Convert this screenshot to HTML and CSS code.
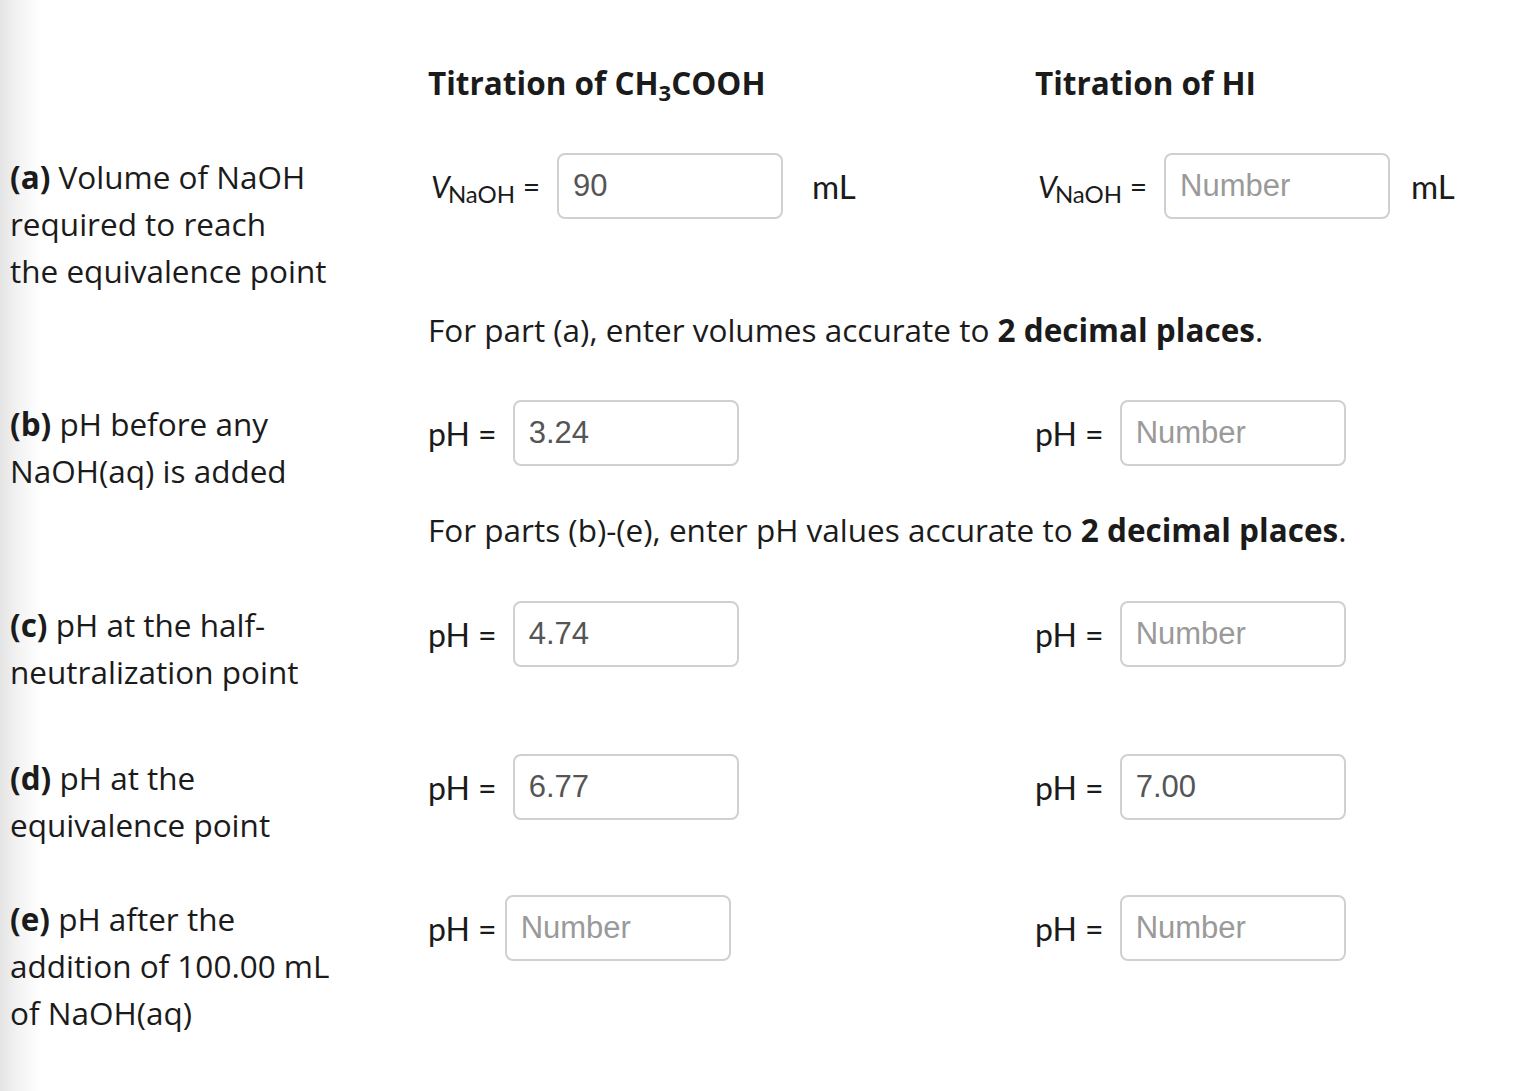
FILE: index.html
```html
<!DOCTYPE html>
<html>
<head>
<meta charset="utf-8">
<link rel="stylesheet" href="styles.css">
</head>
<body>
<div class="page">
  <div class="row header">
    <div></div>
    <div class="title">Titration of CH<sub>3</sub>COOH</div>
    <div class="title">Titration of HI</div>
  </div>

  <div class="row gap-m1">
    <div class="label"><b>(a)</b> Volume of NaOH<br>required to reach<br>the equivalence point</div>
    <div class="cell"><span class="var"><i>V</i><sub>NaOH</sub> =</span><input class="box" type="text" value="90"><span class="unit">mL</span></div>
    <div class="cell"><span class="var"><i>V</i><sub>NaOH</sub> =</span><input class="box" type="text" placeholder="Number"><span class="unit near">mL</span></div>
  </div>

  <div class="row gap-s">
    <div></div>
    <div class="note">For part (a), enter volumes accurate to <b>2 decimal places</b>.</div>
  </div>

  <div class="row gap-m">
    <div class="label"><b>(b)</b> pH before any<br>NaOH(aq) is added</div>
    <div class="cell"><span class="ph">pH =</span><input class="box" type="text" value="3.24"></div>
    <div class="cell"><span class="ph">pH =</span><input class="box" type="text" placeholder="Number"></div>
  </div>

  <div class="row gap-s">
    <div></div>
    <div class="note">For parts (b)-(e), enter pH values accurate to <b>2 decimal places</b>.</div>
  </div>

  <div class="row gap-m2">
    <div class="label"><b>(c)</b> pH at the half-<br>neutralization point</div>
    <div class="cell"><span class="ph">pH =</span><input class="box" type="text" value="4.74"></div>
    <div class="cell"><span class="ph">pH =</span><input class="box" type="text" placeholder="Number"></div>
  </div>

  <div class="row gap-l">
    <div class="label"><b>(d)</b> pH at the<br>equivalence point</div>
    <div class="cell"><span class="ph">pH =</span><input class="box" type="text" value="6.77"></div>
    <div class="cell"><span class="ph">pH =</span><input class="box" type="text" value="7.00"></div>
  </div>

  <div class="row gap-m">
    <div class="label"><b>(e)</b> pH after the<br>addition of 100.00 mL<br>of NaOH(aq)</div>
    <div class="cell"><span class="ph tight">pH =</span><input class="box" type="text" placeholder="Number"></div>
    <div class="cell"><span class="ph">pH =</span><input class="box" type="text" placeholder="Number"></div>
  </div>
</div>
</body>
</html>
```

FILE: styles.css
```css
html, body {
  margin: 0;
  padding: 0;
  background: linear-gradient(to right, #e4e4e4 0px, #f3f3f3 18px, #ffffff 42px);
  min-height: 100%;
}
body {
  height: 1091px;
  font-family: "Open Sans", "Liberation Sans", sans-serif;
  color: #1b1b1b;
}
.page {
  padding: 61px 0 0 10px;
}
.row {
  display: grid;
  grid-template-columns: 418px 607px 1fr;
  align-items: start;
}
.header { height: 44px; }
.title {
  font-weight: 700;
  font-size: 31.5px;
  line-height: 44px;
  white-space: nowrap;
}
.title sub {
  font-size: 22px;
  vertical-align: -6px;
  line-height: 0;
}
.gap-m1 { margin-top: 48px; }
.gap-s { margin-top: 12px; }
.gap-m { margin-top: 47px; }
.gap-m2 { margin-top: 48px; }
.gap-l { margin-top: 59px; }

.label {
  font-size: 31.5px;
  line-height: 47px;
  white-space: nowrap;
  margin-top: 0;
}
.label b { font-weight: 700; }

.note {
  grid-column: 2 / 4;
  font-size: 31.5px;
  line-height: 47px;
  white-space: nowrap;
}
.note b { font-weight: 700; }

.cell {
  display: flex;
  align-items: center;
  height: 66px;
  font-family: Lato, "Liberation Sans", sans-serif;
  font-size: 32px;
  color: #1b1b1b;
}
.var {
  width: 129px;
  padding-left: 3px;
  box-sizing: border-box;
  white-space: nowrap;
  font-size: 30px;
}
.var i { font-style: italic; }
.var sub {
  font-size: 24px;
  vertical-align: -5px;
  line-height: 0;
  margin-left: -2px;
}
.ph {
  margin-right: 16px;
  white-space: nowrap;
}
.ph.tight { margin-right: 8px; }
.unit {
  margin-left: 29px;
  font-size: 33px;
}
.unit.near { margin-left: 21px; }
.box {
  box-sizing: border-box;
  width: 226px;
  height: 66px;
  border: 2px solid #d0d0d0;
  border-radius: 8px;
  padding: 0 14px;
  margin: 0;
  font-family: "Liberation Sans", Arial, sans-serif;
  font-size: 31px;
  color: #555555;
  background: #ffffff;
  outline: none;
}
.box::placeholder {
  color: #9a9a9a;
  opacity: 1;
}
```
